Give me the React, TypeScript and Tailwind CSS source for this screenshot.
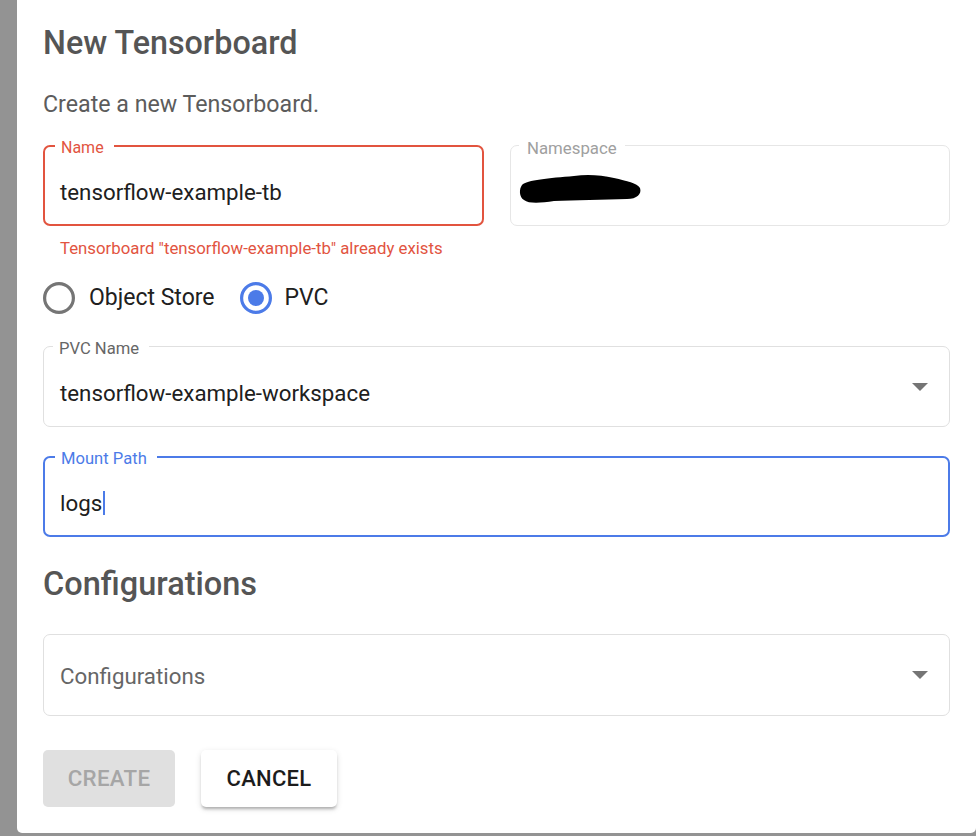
import React from "react";

const font = { fontFamily: "Roboto, 'Noto Sans', Arial, sans-serif" };

function Arrow() {
  return (
    <svg width="16" height="8" viewBox="0 0 16 8" className="shrink-0">
      <path d="M0 0 L16 0 L8 8 Z" fill="#757575" />
    </svg>
  );
}

function Radio({ checked }: { checked: boolean }) {
  const c = checked ? "#4c7be8" : "#757575";
  return (
    <svg width="32" height="32" viewBox="2 2 20 20" className="shrink-0">
      <circle cx="12" cy="12" r="9" fill="none" stroke={c} strokeWidth="2" />
      {checked && <circle cx="12" cy="12" r="5" fill={c} />}
    </svg>
  );
}

export default function App() {
  return (
    <div className="w-[976px] h-[836px] bg-[#939393] pl-[17px] pb-[3px] overflow-hidden" style={font}>
      <div className="bg-white h-full rounded-b-[5px] px-[26px] pt-[23px] flex flex-col">
        <h1 className="text-[32.3px] leading-[40px] font-medium text-[#555555]">New Tensorboard</h1>
        <p className="mt-[29px] text-[23.2px] leading-[24px] text-[#5c5c5c]">Create a new Tensorboard.</p>

        <div className="mt-[29px] flex gap-[26px]">
          <div className="relative flex-1 h-[81px] border-2 border-[#e2543f] rounded-[7px] pl-[15px] pt-[33px]">
            <span className="absolute -top-[8px] left-[10px] bg-white pl-[6px] pr-[10px] text-[16px] leading-[18px] text-[#e2543f]">Name</span>
            <div className="text-[22.3px] leading-[24px] text-[#202020]">tensorflow-example-tb</div>
          </div>
          <div className="relative flex-1 h-[81px] border border-[#e6e6e6] rounded-[7px] pl-[16px] pt-[34px]">
            <span className="absolute -top-[7px] left-[8px] bg-white px-[8px] text-[16.8px] leading-[18px] text-[#a0a0a0]">Namespace</span>
            <svg width="124" height="32" viewBox="0 0 124 32" className="absolute left-[8px] top-[27px]">
              <path
                d="M3,12 C8,7 30,5 55,3 C68,1 82,2 95,5 C108,8 118,10 121,15 C123,21 118,26 108,26 C85,27 55,27 35,28 C22,30 10,31 5,27 C0,24 0,16 3,12 Z"
                fill="#000"
              />
            </svg>
          </div>
        </div>

        <p className="mt-[13px] pl-[17px] text-[16.8px] leading-[18px] text-[#e2543f]">
          Tensorboard "tensorflow-example-tb" already exists
        </p>

        <div className="mt-[25px] h-[32px] flex items-center text-[23px] text-[#202020]">
          <Radio checked={false} />
          <span className="ml-[14px]">Object Store</span>
          <span className="ml-[25px]"><Radio checked={true} /></span>
          <span className="ml-[13px]">PVC</span>
        </div>

        <div className="relative mt-[32px] h-[81px] border border-[#e0e0e0] rounded-[7px] pl-[16px] pr-[21px] flex items-start">
          <span className="absolute -top-[7px] left-[9px] bg-white pl-[6px] pr-[10px] text-[16.6px] leading-[18px] text-[#666666]">PVC Name</span>
          <div className="flex-1 pt-[34px] text-[22.3px] leading-[24px] text-[#202020]">tensorflow-example-workspace</div>
          <div className="self-center"><Arrow /></div>
        </div>

        <div className="relative mt-[29px] h-[81px] border-2 border-[#4c7be8] rounded-[7px] pl-[15px] pt-[33px]">
          <span className="absolute -top-[8px] left-[10px] bg-white pl-[6px] pr-[10px] text-[16.6px] leading-[18px] text-[#4c7be8]">Mount Path</span>
          <div className="flex items-center text-[22.3px] leading-[24px] text-[#202020]">
            logs<span className="inline-block w-[1.5px] h-[24px] bg-[#4c7be8] ml-[1px]"></span>
          </div>
        </div>

        <h2 className="mt-[27px] text-[32.5px] leading-[40px] font-medium text-[#555555]">Configurations</h2>

        <div className="mt-[30px] h-[82px] border border-[#e0e0e0] rounded-[7px] pl-[16px] pr-[21px] flex items-center">
          <div className="flex-1 pt-[2px] text-[22.3px] leading-[24px] text-[#666666]">Configurations</div>
          <Arrow />
        </div>

        <div className="mt-[34px] flex gap-[26px]">
          <button className="w-[132px] h-[57px] rounded-[5px] bg-[#e0e0e0] text-[#a6a6a6] text-[22.3px] font-medium tracking-[0.3px]">
            CREATE
          </button>
          <button className="w-[136px] h-[57px] rounded-[5px] bg-white text-[#1c1c1c] text-[22px] font-medium tracking-[0.3px] shadow-[0_3px_3px_-1px_rgba(0,0,0,0.25),0_2px_6px_0_rgba(0,0,0,0.12)]">
            CANCEL
          </button>
        </div>
      </div>
    </div>
  );
}
